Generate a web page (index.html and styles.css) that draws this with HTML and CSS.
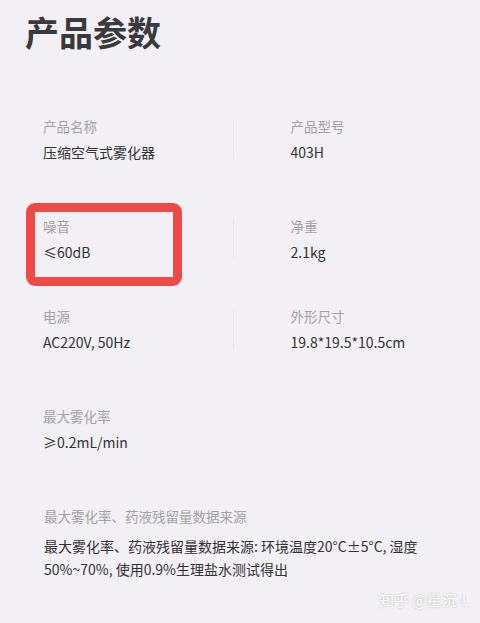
FILE: index.html
```html
<!DOCTYPE html>
<html lang="zh-CN">
<head>
    <meta charset="UTF-8">
    <meta name="viewport" content="width=device-width, initial-scale=1.0">
    <title>产品参数</title>
    <link rel="stylesheet" href="styles.css">
</head>
<body>
    <div class="page">
        <h1>产品参数</h1>

        <div class="spec-row row-first">
            <div class="spec">
                <div class="label">产品名称</div>
                <div class="value">压缩空气式雾化器</div>
            </div>
            <div class="divider"></div>
            <div class="spec spec-right">
                <div class="label">产品型号</div>
                <div class="value">403H</div>
            </div>
        </div>

        <div class="spec-row">
            <div class="spec marked">
                <div class="label">噪音</div>
                <div class="value">≤60dB</div>
                <div class="mark"></div>
            </div>
            <div class="divider"></div>
            <div class="spec spec-right">
                <div class="label">净重</div>
                <div class="value">2.1kg</div>
            </div>
        </div>

        <div class="spec-row row-tight">
            <div class="spec">
                <div class="label">电源</div>
                <div class="value">AC220V, 50Hz</div>
            </div>
            <div class="divider"></div>
            <div class="spec spec-right">
                <div class="label">外形尺寸</div>
                <div class="value">19.8*19.5*10.5cm</div>
            </div>
        </div>

        <div class="spec-row">
            <div class="spec">
                <div class="label">最大雾化率</div>
                <div class="value">≥0.2mL/min</div>
            </div>
        </div>

        <div class="note">
            <div class="label">最大雾化率、药液残留量数据来源</div>
            <p class="note-text">最大雾化率、药液残留量数据来源: 环境温度20°C±5°C, 湿度50%~70%, 使用0.9%生理盐水测试得出</p>
        </div>
    </div>

    <div class="watermark">知乎 @星沉-L</div>
</body>
</html>
```

FILE: styles.css
```css
body {
    margin: 0;
    background-color: #f2f0f5;
    color: #333;
    font-family: "Noto Sans CJK SC", "Noto Sans", sans-serif;
}
.page {
    position: relative;
    height: 623px;
    padding: 12px 0 0 0;
    box-sizing: border-box;
    overflow: hidden;
}
h1 {
    margin: 0 0 0 25px;
    font-size: 34px;
    line-height: 40px;
    font-weight: 700;
    color: #3a3a3c;
}
.spec-row {
    display: flex;
    align-items: center;
    padding-left: 43px;
    margin-top: 54px;
}
.row-first {
    margin-top: 64px;
}
.row-tight {
    margin-top: 44px;
}
.spec {
    position: relative;
    width: 193px;
}
.spec-right {
    margin-left: 57px;
}
.label {
    font-size: 13.5px;
    line-height: 20px;
    color: #a3a3a6;
}
.value {
    margin-top: 6px;
    font-size: 14px;
    line-height: 20px;
    color: #333;
}
.divider {
    width: 1px;
    height: 40px;
    background-color: #e6e4ea;
}
/* red annotation box */
.mark {
    position: absolute;
    left: -17px;
    top: -13px;
    width: 156px;
    height: 83px;
    box-sizing: border-box;
    border: 9px solid #f04a46;
    border-radius: 9px;
}
.note {
    margin-top: 54px;
    padding: 0 50px 0 44px;
}
.note-text {
    margin: 9px 0 0 0;
    font-size: 14px;
    line-height: 23px;
    color: #333;
}
.watermark {
    position: absolute;
    right: 10px;
    top: 590px;
    font-size: 15px;
    line-height: 20px;
    color: #fff;
    text-shadow: 0 0 2px rgba(0, 0, 0, 0.3);
}
```
